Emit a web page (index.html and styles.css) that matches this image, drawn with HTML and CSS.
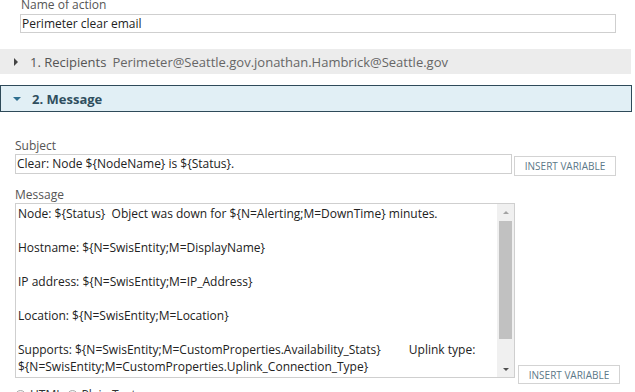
FILE: index.html
```html
<!DOCTYPE html>
<html>
<head>
    <title>Edit Action</title>
    <link rel="stylesheet" href="styles.css">
</head>
<body>
    <!-- Name of action -->
    <div class="name-block">
        <div class="label">Name of action</div>
        <div class="field name-field">Perimeter clear email</div>
    </div>

    <!-- 1. Recipients (collapsed) -->
    <div class="section-bar collapsed">
        <span class="arrow-right"></span>
        <span class="section-title">1. Recipients</span>
        <span class="section-summary">Perimeter@Seattle.gov.jonathan.Hambrick@Seattle.gov</span>
    </div>

    <!-- 2. Message (open) -->
    <div class="section-bar open">
        <span class="arrow-down"></span>
        <span class="section-title">2. Message</span>
    </div>

    <div class="message-body">
        <div class="label">Subject</div>
        <div class="row subject-row">
            <div class="field subject-field">Clear: Node ${NodeName} is ${Status}.</div>
            <button class="insert-btn">Insert variable</button>
        </div>

        <div class="label message-label">Message</div>
        <div class="row message-row">
            <div class="textarea">
                <div class="textarea-content">Node: ${Status}&nbsp; Object was down for ${N=Alerting;M=DownTime} minutes.

Hostname: ${N=SwisEntity;M=DisplayName}

IP address: ${N=SwisEntity;M=IP_Address}

Location: ${N=SwisEntity;M=Location}

Supports: ${N=SwisEntity;M=CustomProperties.Availability_Stats}&nbsp;&nbsp;&nbsp;&nbsp;&nbsp;&nbsp;&nbsp;&nbsp; Uplink type:
${N=SwisEntity;M=CustomProperties.Uplink_Connection_Type}</div>
                <div class="scrollbar">
                    <span class="scroll-up"></span>
                    <div class="scroll-thumb"></div>
                    <div class="scroll-track"></div>
                    <span class="scroll-down"></span>
                </div>
            </div>
            <button class="insert-btn insert-btn-low">Insert variable</button>
        </div>

        <div class="format-row">
            <label class="radio-item"><span class="radio"></span>HTML</label>
            <label class="radio-item"><span class="radio checked"></span>Plain Text</label>
        </div>
    </div>
</body>
</html>
```

FILE: styles.css
```css
/* General */
body {
    font-family: "Open Sans", Arial, sans-serif;
    font-size: 12px;
    color: #333;
    margin: 0;
    padding: 0;
    background: #fff;
    overflow: hidden;
}

.label {
    color: #555;
    font-size: 12px;
    line-height: 14px;
}

.field {
    border: 1px solid #cfcfcf;
    background: white;
    color: #222;
    font-size: 12px;
    line-height: 17px;
    padding: 0 0 0 1px;
    box-sizing: border-box;
    white-space: nowrap;
    overflow: hidden;
}

/* Name of action */
.name-block {
    padding: 0 0 0 20px;
    width: 616px;
    box-sizing: border-box;
}

.name-block .label {
    margin-top: -2px;
    padding-left: 1px;
    margin-bottom: 2px;
}

.name-field {
    height: 19px;
}

/* Section bars */
.section-bar {
    display: flex;
    align-items: center;
    width: 631px;
    box-sizing: border-box;
}

.section-bar.collapsed {
    margin-top: 16px;
    height: 25px;
    background: #ececec;
    padding-left: 14px;
}

.section-bar.collapsed .section-title {
    color: #555;
    font-size: 13px;
    margin-left: 12px;
}

.section-summary {
    color: #666;
    font-size: 13px;
    margin-left: 6px;
}

.section-bar.open {
    margin-top: 11px;
    height: 27px;
    width: 632px;
    background: #e1eff5;
    border: 1px solid #2e4a59;
    padding-left: 12px;
}

.section-bar.open .section-title {
    color: #2f4e5e;
    font-weight: bold;
    font-size: 13px;
    margin-left: 11px;
}

.arrow-right {
    width: 0;
    height: 0;
    border-top: 4px solid transparent;
    border-bottom: 4px solid transparent;
    border-left: 4px solid #444;
}

.arrow-down {
    width: 0;
    height: 0;
    border-left: 4px solid transparent;
    border-right: 4px solid transparent;
    border-top: 4px solid #2f6f8f;
}

/* Message section */
.message-body {
    padding: 27px 0 0 15px;
}

.row {
    display: flex;
}

.subject-row {
    align-items: flex-start;
    margin-top: 1px;
}

.subject-field {
    width: 497px;
    height: 20px;
    line-height: 18px;
}

.insert-btn {
    font-family: "Open Sans", Arial, sans-serif;
    text-transform: uppercase;
    font-size: 10px;
    color: #5c7888;
    background: white;
    border: 1px solid #d3d3d3;
    height: 20px;
    width: 102px;
    padding: 0;
    margin-left: 2px;
    margin-top: 2px;
}

.message-label {
    margin-top: 12px;
}

.message-row {
    align-items: flex-end;
    margin-top: 1px;
}

.textarea {
    display: flex;
    width: 500px;
    height: 175px;
    border: 1px solid #cfcfcf;
    box-sizing: border-box;
}

.textarea-content {
    flex: 1;
    white-space: pre;
    overflow: hidden;
    padding: 1px 0 0 2px;
    line-height: 17px;
    color: #222;
}

/* Scrollbar drawn by hand */
.scrollbar {
    width: 17px;
    background: #f0f0f0;
    display: flex;
    flex-direction: column;
    align-items: center;
}

.scroll-up,
.scroll-down {
    width: 0;
    height: 0;
    border-left: 3px solid transparent;
    border-right: 3px solid transparent;
}

.scroll-up {
    border-bottom: 3px solid #a3a3a3;
    margin: 7px 0 7px;
}

.scroll-down {
    border-top: 3px solid #505050;
    margin: 7px 0 6px;
}

.scroll-thumb {
    width: 13px;
    height: 118px;
    background: #c1c1c1;
}

.scroll-track {
    flex: 1;
}

.insert-btn-low {
    margin-left: 3px;
    margin-bottom: -6px;
    height: 19px;
}

/* Format radios */
.format-row {
    display: flex;
    margin-top: 10px;
    color: #333;
    line-height: 14px;
}

.radio-item {
    display: flex;
    align-items: center;
    margin-right: 4px;
}

.radio {
    width: 11px;
    height: 11px;
    border: 1px solid #aaa;
    border-radius: 50%;
    background: #f4f4f4;
    margin-right: 4px;
    box-sizing: border-box;
    position: relative;
}

.radio.checked::after {
    content: "";
    position: absolute;
    left: 2px;
    top: 2px;
    width: 5px;
    height: 5px;
    border-radius: 50%;
    background: #555;
}
```
